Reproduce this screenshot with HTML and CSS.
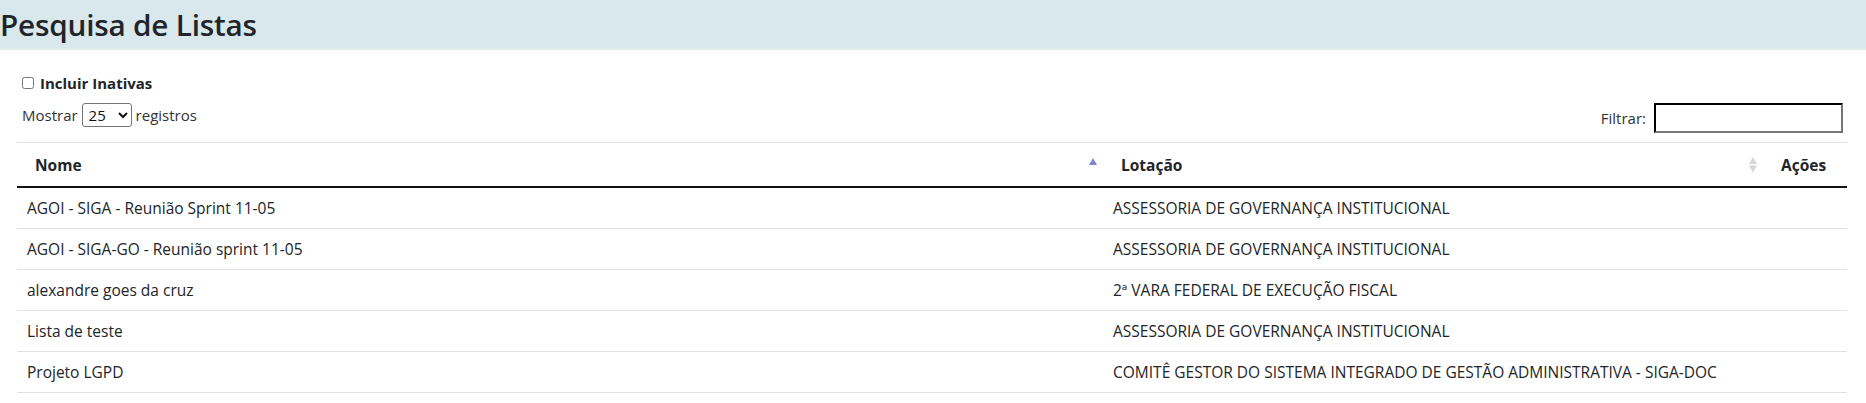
FILE: index.html
```html
<!DOCTYPE html>
<html lang="pt-BR">
<head>
<meta charset="utf-8">
<title>Pesquisa de Listas</title>
<link rel="stylesheet" href="styles.css">
</head>
<body>
<div class="page-header">
  <h2 class="page-title">Pesquisa de Listas</h2>
</div>
<div class="content">
  <div class="check-row">
    <input type="checkbox" id="inativas" class="check">
    <label for="inativas" class="check-label">Incluir Inativas</label>
  </div>
  <div class="controls">
    <div class="length">
      <span>Mostrar</span>
      <select class="length-select">
        <option>25</option>
      </select>
      <span>registros</span>
    </div>
    <div class="filter">
      <span>Filtrar:</span>
      <input type="search" class="filter-input">
    </div>
  </div>
  <table class="grid">
    <colgroup>
      <col class="c-nome">
      <col class="c-lot">
      <col class="c-acoes">
    </colgroup>
    <thead>
      <tr>
        <th><div class="th-in"><span>Nome</span>
          <svg class="sort" width="8" height="16" viewBox="0 0 8 16"><polygon points="4,1 8,8 0,8" fill="#7f83d6"/></svg>
        </div></th>
        <th><div class="th-in"><span>Lotação</span>
          <svg class="sort" width="8" height="16" viewBox="0 0 8 16"><polygon points="4,0 8,7 0,7" fill="#d6d6d6"/><polygon points="0,8.5 8,8.5 4,15.5" fill="#d6d6d6"/></svg>
        </div></th>
        <th><div class="th-in"><span>Ações</span></div></th>
      </tr>
    </thead>
    <tbody>
      <tr><td>AGOI - SIGA - Reunião Sprint 11-05</td><td>ASSESSORIA DE GOVERNANÇA INSTITUCIONAL</td><td></td></tr>
      <tr><td>AGOI - SIGA-GO - Reunião sprint 11-05</td><td>ASSESSORIA DE GOVERNANÇA INSTITUCIONAL</td><td></td></tr>
      <tr><td>alexandre goes da cruz</td><td>2ª VARA FEDERAL DE EXECUÇÃO FISCAL</td><td></td></tr>
      <tr><td>Lista de teste</td><td>ASSESSORIA DE GOVERNANÇA INSTITUCIONAL</td><td></td></tr>
      <tr><td>Projeto LGPD</td><td>COMITÊ GESTOR DO SISTEMA INTEGRADO DE GESTÃO ADMINISTRATIVA - SIGA-DOC</td><td></td></tr>
    </tbody>
  </table>
</div>
</body>
</html>
```
FILE: styles.css
```css
html, body {
  margin: 0;
  padding: 0;
  background: #fff;
}
body {
  font-family: "Open Sans", "Noto Sans", sans-serif;
  font-size: 15.5px;
  color: #212529;
}
.page-header {
  background: #d9e8ec;
  height: 48px;
  border-bottom: 2px solid #e4ecee;
  display: flex;
  align-items: center;
}
.page-title {
  margin: 0;
  padding: 2px 0 0 0;
  font-size: 29.7px;
  font-weight: 600;
  line-height: 38px;
  color: #212529;
  letter-spacing: -0.2px;
}
.content {
  padding: 0 19px 0 17px;
}
.check-row {
  margin-top: 22px;
  height: 22px;
  display: flex;
  align-items: center;
}
.check {
  width: 12px;
  height: 12px;
  margin: 0 6px 0 5px;
}
.check-label {
  font-weight: 700;
  font-size: 15px;
  line-height: 22px;
}
.controls {
  margin-top: 9px;
  display: flex;
  justify-content: space-between;
  align-items: flex-start;
  height: 30px;
}
.length {
  display: flex;
  align-items: center;
  height: 24px;
  gap: 4px;
  padding-left: 5px;
  color: #333;
  font-size: 15px;
}
.length-select {
  width: 50px;
  height: 24px;
  font-family: inherit;
  font-size: 15px;
  border: 1px solid #767676;
  border-radius: 3px;
  background: #fff;
  color: #111;
  padding: 0 2px;
}
.filter {
  display: flex;
  align-items: center;
  gap: 8px;
  height: 30px;
  margin-right: 4px;
  color: #333;
  font-size: 15px;
}
.filter-input {
  width: 185px;
  height: 26px;
  padding: 0;
  border: 2px inset #767676;
  border-top-color: #222;
  border-left-color: #222;
  background: #fff;
  box-sizing: content-box;
}
.grid {
  margin-top: 9px;
  width: 100%;
  border-collapse: collapse;
  table-layout: fixed;
  border-top: 1px solid #e0e0e0;
}
.c-nome { width: 1086px; }
.c-lot { width: 660px; }
.c-acoes { width: 84px; }
.grid th {
  text-align: left;
  font-weight: 700;
  padding: 11px 6px 10px 18px;
  line-height: 22px;
  border-bottom: 2px solid #111;
}
.th-in {
  display: flex;
  align-items: center;
  justify-content: space-between;
}
.sort {
  display: block;
}
.grid td {
  padding: 9px 10px;
  line-height: 22px;
  border-bottom: 1px solid #dee2e6;
  white-space: nowrap;
}
```
